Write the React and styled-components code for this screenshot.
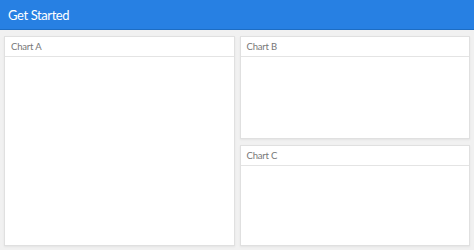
import styled, { createGlobalStyle } from 'styled-components';

const GlobalStyle = createGlobalStyle`
  html, body {
    margin: 0;
    padding: 0;
    background: #f1f1f1;
    font-family: Lato, "Open Sans", sans-serif;
  }
`;

const Page = styled.div`
  width: 474px;
  height: 250px;
  display: flex;
  flex-direction: column;
  background: #f1f1f1;
`;

const NavBar = styled.header`
  height: 30px;
  flex-shrink: 0;
  background: #2780e3;
  border-bottom: 1px solid #1d6dc4;
  box-sizing: border-box;
  display: flex;
  align-items: center;
  padding-left: 8px;
  color: #fff;
  font-size: 13px;
  letter-spacing: -0.4px;
`;

const Body = styled.main`
  flex: 1;
  display: flex;
  gap: 5px;
  padding: 6px 4px 4px 4px;
  min-height: 0;
`;

const Column = styled.div`
  flex: 1;
  display: flex;
  flex-direction: column;
  gap: 6px;
  min-width: 0;
`;

const Card = styled.section`
  flex: ${(p) => p.grow || 1};
  display: flex;
  flex-direction: column;
  background: #fff;
  border: 1px solid #e0e0e0;
  box-shadow: 0 1px 2px rgba(0, 0, 0, 0.06);
`;

const CardTitle = styled.div`
  height: 20px;
  box-sizing: border-box;
  border-bottom: 1px solid #e4e4e4;
  display: flex;
  align-items: center;
  padding-left: 6px;
  font-size: 9.5px;
  letter-spacing: -0.2px;
  color: #777;
`;

const CardBody = styled.div`
  flex: 1;
`;

const Chart = ({ title, grow }) => (
  <Card grow={grow}>
    <CardTitle>{title}</CardTitle>
    <CardBody />
  </Card>
);

export default function App() {
  return (
    <Page>
      <GlobalStyle />
      <NavBar>Get Started</NavBar>
      <Body>
        <Column>
          <Chart title="Chart A" />
        </Column>
        <Column>
          <Chart title="Chart B" grow={1.03} />
          <Chart title="Chart C" grow={1} />
        </Column>
      </Body>
    </Page>
  );
}
